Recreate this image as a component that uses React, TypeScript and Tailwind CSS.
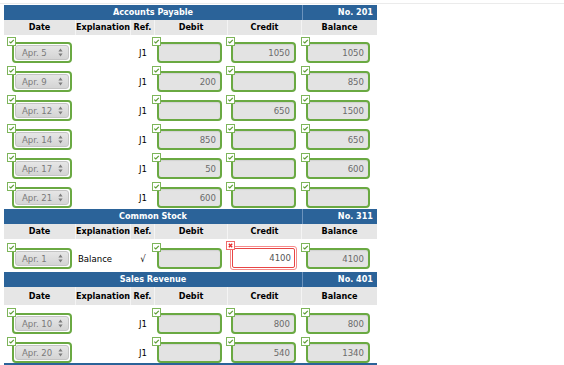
import type { ReactNode } from 'react'

interface LedgerRow {
  date: string
  explanation?: string
  ref: string
  debit?: string
  credit?: string
  balance?: string
  creditError?: boolean
}

interface LedgerSection {
  title: string
  number: string
  headH: string
  rowH: string
  rowPt: string
  rows: LedgerRow[]
}

const SECTIONS: LedgerSection[] = [
  {
    title: 'Accounts Payable',
    number: 'No. 201',
    headH: 'h-[15px]',
    rowH: 'h-[29px]',
    rowPt: 'pt-[7px]',
    rows: [
      { date: 'Apr. 5', ref: 'J1', credit: '1050', balance: '1050' },
      { date: 'Apr. 9', ref: 'J1', debit: '200', balance: '850' },
      { date: 'Apr. 12', ref: 'J1', credit: '650', balance: '1500' },
      { date: 'Apr. 14', ref: 'J1', debit: '850', balance: '650' },
      { date: 'Apr. 17', ref: 'J1', debit: '50', balance: '600' },
      { date: 'Apr. 21', ref: 'J1', debit: '600' },
    ],
  },
  {
    title: 'Common Stock',
    number: 'No. 311',
    headH: 'h-[15px]',
    rowH: 'h-[33px]',
    rowPt: 'pt-[9px]',
    rows: [
      { date: 'Apr. 1', explanation: 'Balance', ref: '√', credit: '4100', balance: '4100', creditError: true },
    ],
  },
  {
    title: 'Sales Revenue',
    number: 'No. 401',
    headH: 'h-[18px]',
    rowH: 'h-[29px]',
    rowPt: 'pt-[8px]',
    rows: [
      { date: 'Apr. 10', ref: 'J1', credit: '800', balance: '800' },
      { date: 'Apr. 20', ref: 'J1', credit: '540', balance: '1340' },
    ],
  },
]

const COLS = 'grid grid-cols-[72px_55px_24px_73px_74px_75px]'

function CheckMark() {
  return (
    <svg width="9" height="9" viewBox="0 0 9 9" className="absolute -left-[5px] -top-[5px]">
      <rect x="0.5" y="0.5" width="8" height="8" fill="#fff" stroke="#7db55a" />
      <path d="M2.3 4.6 L3.8 6 L6.8 2.8" fill="none" stroke="#5d9e35" strokeWidth="1.2" />
    </svg>
  )
}

function CrossMark() {
  return (
    <svg width="9" height="9" viewBox="0 0 9 9" className="absolute -left-[5px] -top-[5px] z-10">
      <rect x="0.5" y="0.5" width="8" height="8" fill="#fff" stroke="#f06a6a" />
      <path d="M2.8 2.8 L6.2 6.2 M6.2 2.8 L2.8 6.2" stroke="#e52b2b" strokeWidth="1.4" />
    </svg>
  )
}

function Field({ value, error }: { value?: string; error?: boolean }) {
  if (error) {
    return (
      <div className="relative">
        <CrossMark />
        <div className="h-[24px] -mt-[2px] -mx-[1px] rounded-[3px] border border-[#f58b8b] p-[1px]">
          <div className="h-full rounded-[2px] border border-[#e84545] bg-white flex items-center justify-end pr-[3px] text-[#555]">
            {value}
          </div>
        </div>
      </div>
    )
  }
  return (
    <div className="relative">
      <CheckMark />
      <div className="h-[21px] rounded-[4px] border-2 border-[#6aa942] bg-[#e3e3e3] flex items-center justify-end pr-[4px] text-[#6b6b6b] shadow-[inset_0_1px_1px_rgba(0,0,0,0.08)]">
        {value}
      </div>
    </div>
  )
}

function DateSelect({ label }: { label: string }) {
  return (
    <div className="relative">
      <CheckMark />
      <div className="h-[21px] rounded-[4px] border-2 border-[#6aa942] bg-white p-[1px]">
        <div className="h-full rounded-[3px] border border-[#c4c4c4] bg-gradient-to-b from-[#e6e6e6] to-[#d4d4d4] flex items-center justify-between pl-[6px] pr-[5px] text-[#7a7a7a]">
          <span>{label}</span>
          <svg width="5" height="9" viewBox="0 0 5 9">
            <path d="M2.5 0.5 L4.6 3.4 H0.4 Z M2.5 8.5 L4.6 5.6 H0.4 Z" fill="#7d7d7d" />
          </svg>
        </div>
      </div>
    </div>
  )
}

function HeadCell({ children, last }: { children: ReactNode; last?: boolean }) {
  return (
    <div className={`flex items-center justify-center font-bold text-[9px] text-black ${last ? '' : 'border-r border-[#f4f4f4]'}`}>
      {children}
    </div>
  )
}

function Section({ s }: { s: LedgerSection }) {
  return (
    <div>
      <div className={`${COLS} h-[15px] bg-[#2b6399] text-white text-[9px] font-bold`}>
        <div className="col-span-5 flex items-center justify-center">{s.title}</div>
        <div className="flex items-center justify-end pr-[4px] border-l border-[#6c93bd]">{s.number}</div>
      </div>
      <div className={`${COLS} ${s.headH} bg-[#e6e6e6]`}>
        <HeadCell>Date</HeadCell>
        <HeadCell>Explanation</HeadCell>
        <HeadCell>Ref.</HeadCell>
        <HeadCell>Debit</HeadCell>
        <HeadCell>Credit</HeadCell>
        <HeadCell last>Balance</HeadCell>
      </div>
      {s.rows.map(r => (
        <div key={r.date} className={`${COLS} ${s.rowH} ${s.rowPt} bg-white text-[9.5px]`}>
          <div className="pl-[8px] pr-[4px]">
            <DateSelect label={r.date} />
          </div>
          <div className="h-[21px] flex items-center pl-[2px] text-black">{r.explanation}</div>
          <div className="h-[21px] flex items-center justify-center text-black">{r.ref}</div>
          <div className="pl-[2px] pr-[6px]">
            <Field value={r.debit} />
          </div>
          <div className="pl-[3px] pr-[6px]">
            <Field value={r.credit} error={r.creditError} />
          </div>
          <div className="pl-[4px] pr-[7px]">
            <Field value={r.balance} />
          </div>
        </div>
      ))}
    </div>
  )
}

export default function App() {
  return (
    <div className="w-[564px] h-[365px] overflow-hidden bg-white leading-none font-['DejaVu_Sans_Condensed','Liberation_Sans',sans-serif]">
      <div className="h-[5px] border-t-[3px] border-white">
        <div className="h-px bg-[#ebebeb]" />
      </div>
      <div className="ml-[4px] w-[373px]">
        {SECTIONS.map(s => (
          <Section key={s.title} s={s} />
        ))}
        <div className="h-[15px] bg-[#2b6399]" />
      </div>
    </div>
  )
}
